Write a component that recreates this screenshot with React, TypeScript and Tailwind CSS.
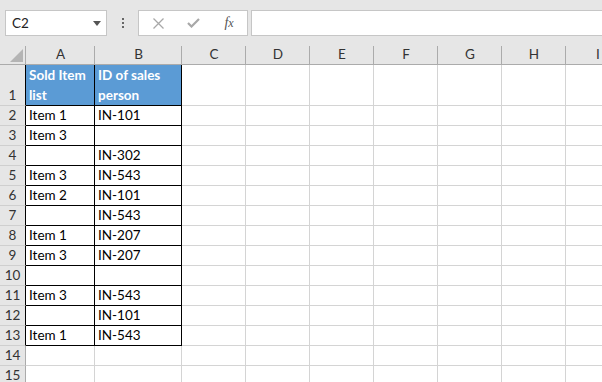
import React from "react";

const cols = [
  { key: "A", w: "w-[69px]" },
  { key: "B", w: "w-[87px]" },
  { key: "C", w: "w-[64px]" },
  { key: "D", w: "w-[64px]" },
  { key: "E", w: "w-[64px]" },
  { key: "F", w: "w-[64px]" },
  { key: "G", w: "w-[64px]" },
  { key: "H", w: "w-[64px]" },
  { key: "I", w: "w-[64px]" },
];

const data: [string, string][] = [
  ["Item 1", "IN-101"],
  ["Item 3", ""],
  ["", "IN-302"],
  ["Item 3", "IN-543"],
  ["Item 2", "IN-101"],
  ["", "IN-543"],
  ["Item 1", "IN-207"],
  ["Item 3", "IN-207"],
  ["", ""],
  ["Item 3", "IN-543"],
  ["", "IN-101"],
  ["Item 1", "IN-543"],
  ["", ""],
  ["", ""],
];

const Toolbar = () => (
  <div className="flex h-[44px] items-start pt-[10px] pl-[5px] bg-[#e6e6e6]">
    <div className="flex h-[26px] w-[102px] items-center justify-between border border-[#c6c6c6] bg-white pl-[6px] pr-[5px] text-[13.5px] text-[#222]">
      <span>C2</span>
      <svg width="8" height="5" viewBox="0 0 8 5">
        <path d="M0 0 L8 0 L4 5 Z" fill="#555" />
      </svg>
    </div>
    <div className="flex w-[31px] h-[26px] flex-col items-center justify-center gap-[2px]">
      <span className="block h-[2px] w-[2px] bg-[#666]" />
      <span className="block h-[2px] w-[2px] bg-[#666]" />
      <span className="block h-[2px] w-[2px] bg-[#666]" />
    </div>
    <div className="flex h-[26px] w-[110px] items-center border border-[#c6c6c6] bg-white">
      <div className="flex w-[36px] justify-center pl-[2px]">
        <svg width="11" height="11" viewBox="0 0 11 11">
          <path d="M0.5 0.5 L10.5 10.5 M10.5 0.5 L0.5 10.5" stroke="#a8a8a8" strokeWidth="1.3" fill="none" />
        </svg>
      </div>
      <div className="flex w-[36px] justify-center">
        <svg width="13" height="10" viewBox="0 0 13 10">
          <path d="M1 5 L4.5 8.5 L12 1" stroke="#a8a8a8" strokeWidth="2.2" fill="none" />
        </svg>
      </div>
      <div className="flex w-[36px] justify-center">
        <span className="font-['Liberation_Serif',serif] text-[14px] italic text-[#555] leading-none">
          f<span className="text-[12px]">x</span>
        </span>
      </div>
    </div>
    <div className="ml-[3px] h-[26px] flex-1 border border-r-0 border-[#c6c6c6] bg-white" />
  </div>
);

const HeaderRow = () => (
  <div className="flex h-[21px] border-b border-[#ababab] bg-[#e6e6e6]">
    <div className="relative w-[26px] shrink-0">
      <svg className="absolute left-[10px] top-[5px]" width="13" height="13" viewBox="0 0 13 13">
        <path d="M0 13 L13 13 L13 0 Z" fill="#b4b4b4" />
      </svg>
      <span className="absolute right-0 bottom-0 h-[18px] w-px bg-[#ababab]" />
    </div>
    {cols.map((c) => (
      <div
        key={c.key}
        className={`relative ${c.w} shrink-0 flex items-center justify-center text-[13.5px] text-[#333]`}
      >
        {c.key}
        <span className="absolute right-0 bottom-0 h-[18px] w-px bg-[#ababab]" />
      </div>
    ))}
  </div>
);

export default function App() {
  return (
    <div className="w-[602px] h-[382px] overflow-hidden bg-white font-['Lato','Liberation_Sans',sans-serif]">
      <Toolbar />
      <HeaderRow />
      {/* row 1: table header */}
      <div className="flex h-[41px]">
        <div className="w-[26px] shrink-0 flex items-end justify-center border-r border-b border-r-black border-b-[#cfcfcf] bg-[#e6e6e6] text-[13.5px] leading-[20px] text-[#333]">
          1
        </div>
        <div className="w-[69px] shrink-0 flex items-end border-r border-b border-black bg-[#5b9bd5] pl-[3px] text-[13.5px] font-bold leading-[20px] text-white">
          <span>
            Sold Item
            <br />
            list
          </span>
        </div>
        <div className="w-[87px] shrink-0 flex items-end border-r border-b border-black bg-[#5b9bd5] pl-[3px] text-[13.5px] font-bold leading-[20px] text-white">
          <span>
            ID of sales
            <br />
            person
          </span>
        </div>
        {cols.slice(2).map((c) => (
          <div key={c.key} className={`${c.w} shrink-0 border-r border-b border-[#d4d4d4]`} />
        ))}
      </div>
      {data.map(([a, b], i) => {
        const n = i + 2;
        const inTable = n <= 13;
        return (
          <div key={n} className="flex h-[20px]">
            <div
              className={`w-[26px] shrink-0 flex items-end justify-center border-r border-b border-b-[#cfcfcf] bg-[#e6e6e6] text-[13.5px] leading-[19px] text-[#333] ${
                inTable ? "border-r-black" : "border-r-[#ababab]"
              }`}
            >
              {n}
            </div>
            <div
              className={`w-[69px] shrink-0 flex items-end border-r border-b pl-[3px] text-[13.5px] leading-[19px] text-black ${
                inTable ? "border-black" : "border-[#d4d4d4]"
              }`}
            >
              {a}
            </div>
            <div
              className={`w-[87px] shrink-0 flex items-end border-r border-b pl-[3px] text-[13.5px] leading-[19px] text-black ${
                inTable ? "border-black" : "border-[#d4d4d4]"
              }`}
            >
              {b}
            </div>
            {cols.slice(2).map((c) => (
              <div key={c.key} className={`${c.w} shrink-0 border-r border-b border-[#d4d4d4]`} />
            ))}
          </div>
        );
      })}
    </div>
  );
}
